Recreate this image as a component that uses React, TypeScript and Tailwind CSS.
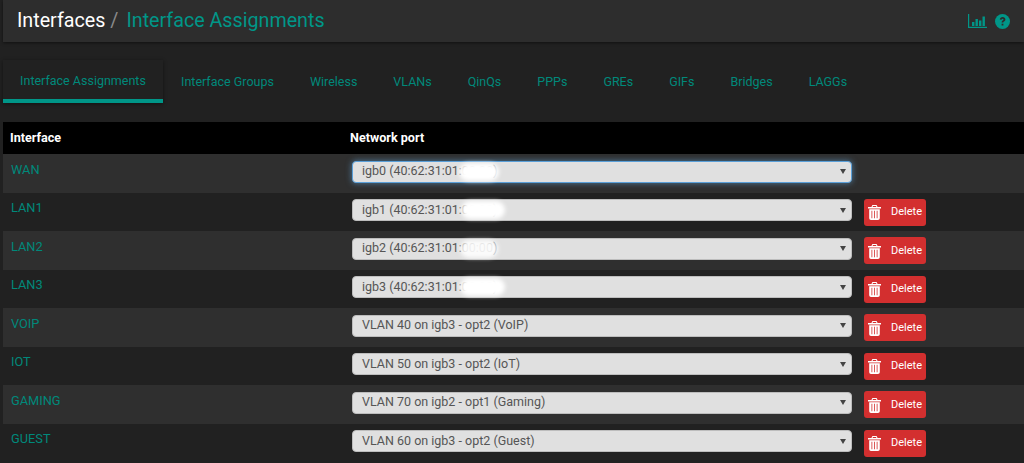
import React from 'react';

const tabs = ['Interface Assignments', 'Interface Groups', 'Wireless', 'VLANs', 'QinQs', 'PPPs', 'GREs', 'GIFs', 'Bridges', 'LAGGs'];

const rows = [
  { name: 'WAN', port: 'igb0 (40:62:31:01:00:00)', smudge: 'left-[106px] w-[40px]', focus: true },
  { name: 'LAN1', port: 'igb1 (40:62:31:01:00:00)', smudge: 'left-[108px] w-[44px]' },
  { name: 'LAN2', port: 'igb2 (40:62:31:01:00:00)', smudge: 'left-[107px] w-[38px] opacity-90' },
  { name: 'LAN3', port: 'igb3 (40:62:31:01:00:00)', smudge: 'left-[107px] w-[45px]' },
  { name: 'VOIP', port: 'VLAN 40 on igb3 - opt2 (VoIP)' },
  { name: 'IOT', port: 'VLAN 50 on igb3 - opt2 (IoT)' },
  { name: 'GAMING', port: 'VLAN 70 on igb2 - opt1 (Gaming)' },
  { name: 'GUEST', port: 'VLAN 60 on igb3 - opt2 (Guest)' },
];

const TrashIcon = () => (
  <svg width="13" height="15" viewBox="0 0 13 15" fill="#ffffff">
    <path d="M4.400 0h4.200l1 2H13v1.600H0V2h3.400zM5 1.100l-.4.9h3.800L8 1.100z" fillRule="evenodd" />
    <path d="M1.200 4.300h10.600V13c0 1.100-.8 2-1.800 2H3c-1 0-1.800-.9-1.800-2zm2.300 1.500v7.400h.8V5.800zm2.600 0v7.400h.8V5.800zm2.600 0v7.400h.8V5.800z" fillRule="evenodd" />
  </svg>
);

const App: React.FC = () => {
  return (
    <div className="h-[463px] w-[1024px] overflow-hidden bg-[#212121] pl-[3px] font-['Roboto',sans-serif]">
      {/* Page title */}
      <div className="flex h-[42px] items-center justify-between bg-[#2d2d2d] pl-[14px] pr-[14px] shadow-[0_1px_3px_rgba(0,0,0,0.5)]">
        <h1 className="text-[19.7px] font-normal text-white">
          Interfaces <span className="text-[#8a8a8a]">/</span>
          <span className="ml-[8px] text-[#009688]">Interface Assignments</span>
        </h1>
        <div className="flex items-center gap-[8px]">
          <svg width="19" height="14" viewBox="0 0 19 14" className="text-[#009688]" fill="currentColor">
            <path d="M0 0h1.200v12.800H19V14H0z" />
            <rect x="4" y="8" width="2.400" height="4" />
            <rect x="7.500" y="5" width="2.400" height="7" />
            <rect x="11" y="6.500" width="2.400" height="5.500" />
            <rect x="14.500" y="2.500" width="2.400" height="9.500" />
          </svg>
          <svg width="15" height="15" viewBox="0 0 15 15">
            <circle cx="7.500" cy="7.500" r="7.500" fill="#009688" />
            <path d="M4.800 5.600c.1-1.600 1.300-2.500 2.800-2.500 1.600 0 2.800 1 2.800 2.300 0 1-.6 1.600-1.400 2.100-.5.300-.7.600-.7 1.100H6.600c0-1 .3-1.600 1-2.100.5-.4.900-.6.900-1 0-.4-.4-.7-.9-.7s-1 .3-1.100.9z" fill="#2d2d2d" />
            <rect x="6.600" y="9.700" width="1.800" height="1.800" fill="#2d2d2d" />
          </svg>
        </div>
      </div>

      {/* Tabs */}
      <div className="mt-[18px] flex h-[43px] items-stretch">
        {tabs.map((tab, i) => (
          <div
            key={tab}
            className={
              i === 0
                ? 'flex w-[160px] items-center justify-center border-b-[4px] border-[#009688] pt-[4px] text-[12.5px] text-[#00897b] shadow-[0_1px_4px_rgba(0,0,0,0.45)]'
                : 'flex items-center px-[18px] pt-[1px] text-[12.5px] text-[#00897b]'
            }
          >
            {tab}
          </div>
        ))}
      </div>

      {/* Assignments table */}
      <div className="mt-[19px]">
        <div className="flex h-[32px] items-center bg-black text-[12.6px] font-bold text-white">
          <div className="w-[347px] pl-[7px]">Interface</div>
          <div>Network port</div>
        </div>
        {rows.map((row, i) => (
          <div key={row.name} className={`flex h-[38.5px] items-start ${i % 2 === 0 ? 'bg-[#2f2f2f]' : 'bg-[#212121]'}`}>
            <div className="w-[349px] pl-[8px] pt-[6.5px] text-[12.8px] leading-[18px] text-[#00897b]">{row.name}</div>
            <div
              className={`relative mt-[6.5px] flex h-[22px] w-[500px] items-center justify-between overflow-visible rounded-[4px] bg-[#e0e0e0] pl-[9px] pr-[4px] text-[12.5px] text-[#555555] ${
                row.focus ? 'border border-[#5a9fd8] shadow-[0_0_6px_rgba(102,175,233,0.6)]' : 'border border-[#bdbdbd]'
              }`}
            >
              <span>{row.port}</span>
              <span className="mr-[1px] h-0 w-0 border-x-[3px] border-t-[5px] border-x-transparent border-t-[#444444]" />
              {row.smudge && <span className={`absolute top-[1px] h-[18px] rounded-full bg-white blur-[2px] ${row.smudge}`} />}
            </div>
            {!row.focus && (
              <div className="ml-[12px] mt-[6px] flex h-[27px] w-[62px] items-center rounded-[3px] bg-[#d32f2f] pl-[4px] pt-[1px] text-[11px] text-white">
                <TrashIcon />
                <span className="ml-[10px]">Delete</span>
              </div>
            )}
          </div>
        ))}
      </div>
    </div>
  );
};

export default App;
